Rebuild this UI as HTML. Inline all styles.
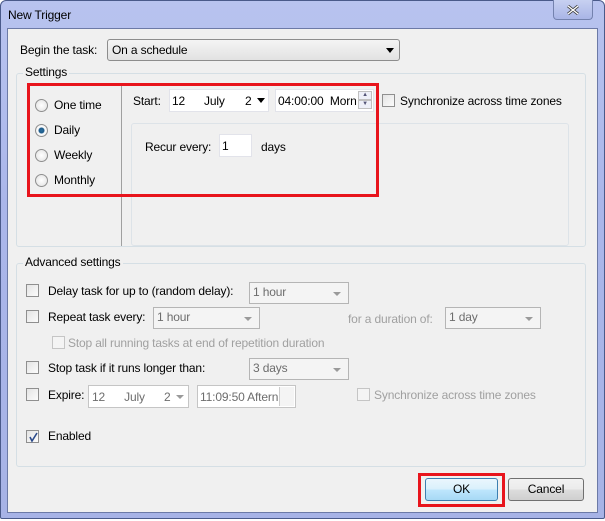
<!DOCTYPE html>
<html><head><style>
*{margin:0;padding:0;box-sizing:border-box}
body{width:605px;height:521px;overflow:hidden;font-family:"Liberation Sans",sans-serif;font-size:12px;letter-spacing:-0.15px;color:#000;background:#fff}
.frame{position:absolute;left:0;top:0;width:605px;height:519px;background:linear-gradient(180deg,#b8c3ef 0%,#aab6ea 40%,#a7b3e6 100%);border:1px solid #4a5a8a;border-radius:6px 6px 2px 2px}
.content{position:absolute;left:7px;top:28px;width:591px;height:485px;background:#f0f0f0;border:1px solid #6c7aa6}
.a{position:absolute;white-space:nowrap}
.grp{position:absolute;border:1px solid #d5dfe5;border-radius:3px}
.lbl{position:absolute;background:#f0f0f0;padding:0 2px;white-space:nowrap}
.box{position:absolute;background:#fff;border:1px solid #abadb3}
.cb{position:absolute;width:13px;height:13px;border:1px solid #8f8f8f;background:linear-gradient(135deg,#e4e4e4,#fbfbfb)}
.cbd{border-color:#c5c5c5;background:#f4f4f4}
.rd{position:absolute;width:13px;height:13px;border-radius:50%;border:1px solid #8f8f8f;background:radial-gradient(circle,#fff,#e0e0e0)}
.combo{position:absolute;border:1px solid #b5b5b5;background:#f4f4f4;color:#6d6d6d;padding:2px 3px}
.combo:after{content:"";position:absolute;right:7px;top:9px;border:4px solid transparent;border-top:4px solid #9a9a9a;border-bottom:0}
.gray{color:#a0a0a0}
.red{position:absolute;border:3px solid #e8141c}
.btn{position:absolute;border:1px solid #707070;border-radius:3px;background:linear-gradient(#f2f2f2 0%,#ebebeb 50%,#dddddd 51%,#cfcfcf 100%);text-align:center;line-height:20px}
</style></head><body>
<div class="frame"></div>
<div class="a" style="left:8px;top:8px;font-size:12px">New Trigger</div>
<div class="a" style="left:553px;top:-1px;width:40px;height:21px;border:1px solid #7482ae;border-top:0;border-radius:0 0 4px 4px;background:linear-gradient(#c9d2f2,#a9b5e6)"></div>
<svg class="a" style="left:565px;top:4px" width="16" height="12"><path d="M3 2 L13 10 M13 2 L3 10" stroke="#3a3a3a" stroke-width="3"/><path d="M3 2 L13 10 M13 2 L3 10" stroke="#fff" stroke-width="1.4"/></svg>
<div class="content"></div>

<div class="a" style="left:20px;top:43px">Begin the task:</div>
<div class="a" style="left:107px;top:39px;width:293px;height:22px;border:1px solid #8d8d8d;border-radius:3px;background:linear-gradient(#f4f4f4,#e2e2e2);padding:3px 4px">On a schedule</div>
<div class="a" style="left:386px;top:48px;border:4px solid transparent;border-top:5px solid #000;border-bottom:0"></div>

<div class="grp" style="left:16px;top:73px;width:570px;height:174px"></div>
<div class="lbl" style="left:23px;top:65px">Settings</div>
<div class="a" style="left:121px;top:86px;width:1px;height:160px;background:#a0a0a0"></div>
<div class="rd" style="left:35px;top:99px"></div><div class="a" style="left:54px;top:98px">One time</div>
<div class="rd" style="left:35px;top:124px;background:radial-gradient(circle,#2a6f9e 0,#1d5a8a 2.5px,#fff 3.5px,#e0e0e0)"></div><div class="a" style="left:54px;top:123px">Daily</div>
<div class="rd" style="left:35px;top:149px"></div><div class="a" style="left:54px;top:148px">Weekly</div>
<div class="rd" style="left:35px;top:174px"></div><div class="a" style="left:54px;top:173px">Monthly</div>

<div class="a" style="left:133px;top:94px">Start:</div>
<div class="box" style="left:169px;top:89px;width:100px;height:23px;border-color:#e2e3ea"></div>
<div class="a" style="left:172px;top:94px">12</div><div class="a" style="left:204px;top:94px">July</div><div class="a" style="left:245px;top:94px">2</div>
<div class="a" style="left:257px;top:98px;border:4px solid transparent;border-top:5px solid #000;border-bottom:0"></div>
<div class="box" style="left:275px;top:89px;width:99px;height:23px;border-color:#e2e3ea"></div>
<div class="a" style="left:278px;top:94px">04:00:00&nbsp; Morn</div>
<div class="a" style="left:358px;top:91px;width:14px;height:9px;border:1px solid #c0c0c0;background:#eef0f8;font-size:6px;text-align:center;color:#557">▲</div>
<div class="a" style="left:358px;top:100px;width:14px;height:9px;border:1px solid #c0c0c0;background:#eef0f8;font-size:6px;text-align:center;color:#557">▼</div>
<div class="cb" style="left:382px;top:94px"></div>
<div class="a" style="left:400px;top:94px">Synchronize across time zones</div>
<div class="grp" style="left:131px;top:123px;width:438px;height:123px;border-color:#dde3e8"></div>
<div class="a" style="left:145px;top:140px">Recur every:</div>
<div class="box" style="left:219px;top:134px;width:33px;height:23px;border-color:#e2e3ea"></div>
<div class="a" style="left:222px;top:139px">1</div>
<div class="a" style="left:261px;top:140px">days</div>
<div class="red" style="left:27px;top:83px;width:352px;height:114px"></div>

<div class="grp" style="left:16px;top:263px;width:570px;height:204px"></div>
<div class="lbl" style="left:23px;top:255px">Advanced settings</div>
<div class="cb" style="left:26px;top:284px"></div><div class="a" style="left:48px;top:284px">Delay task for up to (random delay):</div>
<div class="combo" style="left:249px;top:282px;width:100px;height:22px">1 hour</div>
<div class="cb" style="left:26px;top:310px"></div><div class="a" style="left:48px;top:310px">Repeat task every:</div>
<div class="combo" style="left:153px;top:307px;width:107px;height:22px">1 hour</div>
<div class="a gray" style="left:348px;top:312px">for a duration of:</div>
<div class="combo" style="left:445px;top:307px;width:96px;height:22px">1 day</div>
<div class="cb cbd" style="left:52px;top:336px"></div><div class="a gray" style="left:68px;top:336px">Stop all running tasks at end of repetition duration</div>
<div class="cb" style="left:26px;top:361px"></div><div class="a" style="left:48px;top:361px">Stop task if it runs longer than:</div>
<div class="combo" style="left:249px;top:358px;width:100px;height:22px">3 days</div>
<div class="cb" style="left:26px;top:388px"></div><div class="a" style="left:48px;top:388px">Expire:</div>
<div class="box" style="left:88px;top:385px;width:101px;height:23px;border-color:#c5c5c5;color:#6d6d6d;padding:4px 3px">12&nbsp;&nbsp;&nbsp;&nbsp;&nbsp;&nbsp;July&nbsp;&nbsp;&nbsp;&nbsp;&nbsp;&nbsp;2</div>
<div class="a" style="left:176px;top:395px;border:4px solid transparent;border-top:4px solid #9a9a9a;border-bottom:0"></div>
<div class="box" style="left:197px;top:385px;width:99px;height:23px;border-color:#c5c5c5;color:#6d6d6d;padding:4px 2px">11:09:50 Aftern</div>
<div class="a" style="left:279px;top:387px;width:15px;height:19px;border-left:1px solid #ccc;background:#f4f4f4"></div>
<div class="cb cbd" style="left:357px;top:388px"></div><div class="a gray" style="left:374px;top:388px">Synchronize across time zones</div>
<div class="cb" style="left:26px;top:430px"></div>
<svg class="a" style="left:27px;top:431px" width="12" height="12"><path d="M3 6 L5 10 L10 2" stroke="#2b4a8a" stroke-width="1.6" fill="none"/></svg>
<div class="a" style="left:48px;top:429px">Enabled</div>

<div class="btn" style="left:425px;top:478px;width:73px;height:23px;border-color:#3c7fb1;background:linear-gradient(#eaf6fd 0%,#d9f0fc 50%,#bee6fd 51%,#a7d9f5 100%)">OK</div>
<div class="red" style="left:418px;top:473px;width:87px;height:34px"></div>
<div class="btn" style="left:508px;top:478px;width:76px;height:23px">Cancel</div>
</body></html>
